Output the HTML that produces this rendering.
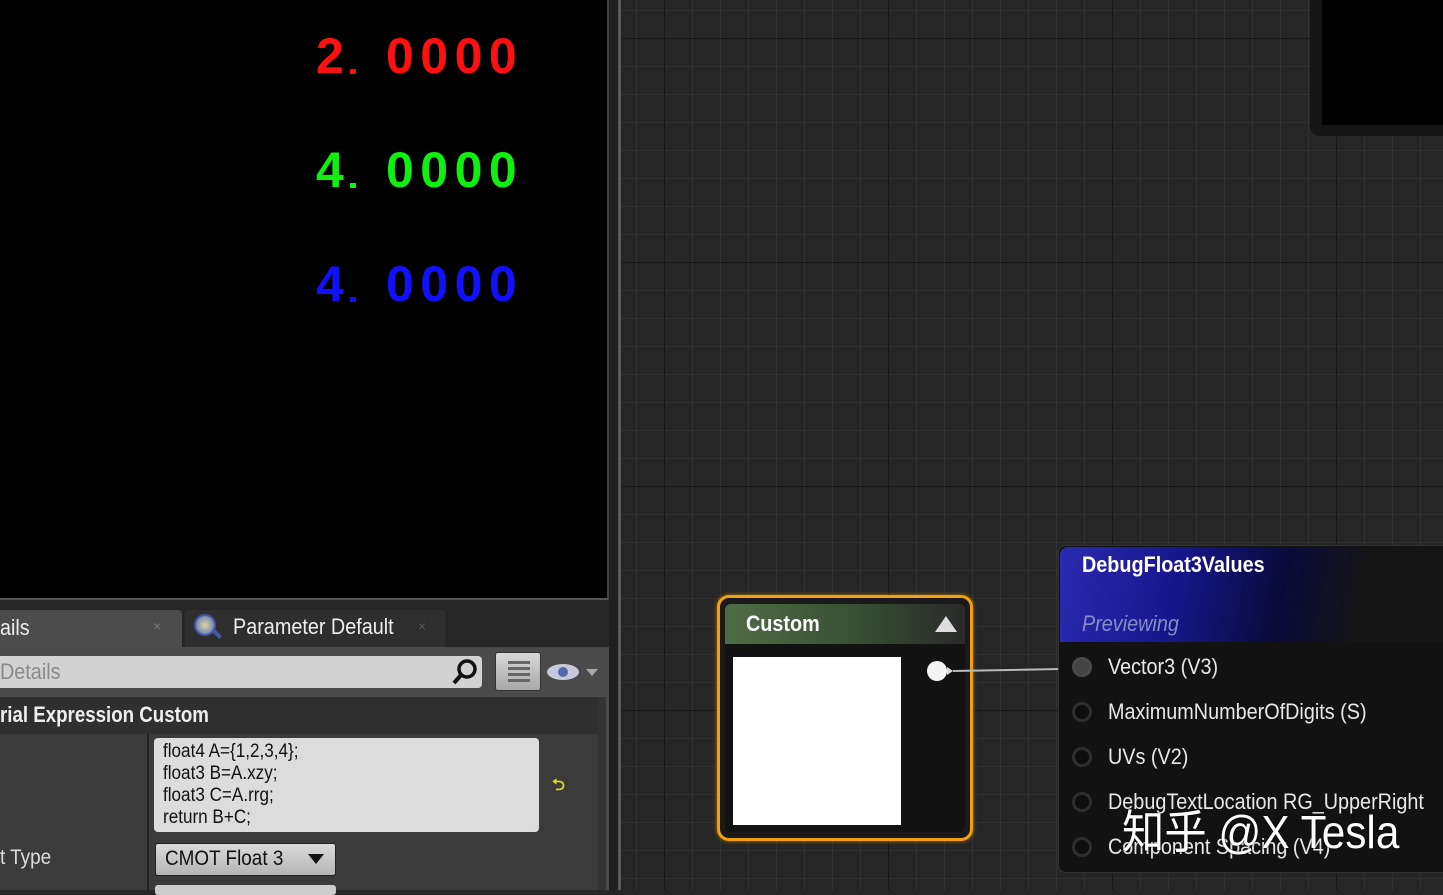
<!DOCTYPE html>
<html><head><meta charset="utf-8"><style>
*{margin:0;padding:0;box-sizing:border-box}
body{width:1443px;height:890px;overflow:hidden;background:#262626;font-family:"Liberation Sans","Noto Sans CJK SC",sans-serif;position:relative}
.abs{position:absolute}
#grid{left:621px;top:0;width:822px;height:890px;
background-color:#262626;
background-image:
linear-gradient(to right,#171717 0 1px,transparent 1px),
linear-gradient(to bottom,#171717 0 1px,transparent 1px),
linear-gradient(to right,#323232 0 1px,transparent 1px),
linear-gradient(to bottom,#323232 0 1px,transparent 1px);
background-size:224px 224px,224px 224px,28px 28px,28px 28px;
background-position:43px 38px,43px 38px,15px 10px,15px 10px}
.num{font-family:"Liberation Sans",sans-serif;font-weight:bold;font-size:50px;line-height:50px;letter-spacing:6.5px;white-space:nowrap}
.dot{font-family:"Liberation Sans",sans-serif;font-weight:bold;font-size:24px}
.pin{width:20px;height:20px;border-radius:50%;border:3px solid #2e2e2e;background:#0e0e0e}
.pl{color:#e8e8e8;font-size:22px;transform:scaleX(0.9);transform-origin:left;white-space:nowrap}
</style></head><body>
<div id="grid" class="abs"></div>
<!-- left viewport -->
<div class="abs" style="left:0;top:0;width:609px;height:600px;background:#000;border-bottom:2px solid #555;border-right:2px solid #444"></div>
<div class="abs" style="left:609px;top:0;width:9px;height:890px;background:#1f1f1f"></div>
<div class="abs" style="left:618px;top:0;width:3px;height:890px;background:#5a5a5a"></div>
<div class="abs num" style="left:316px;top:31px;color:#ff1010">2</div>
<div class="abs" style="left:350px;top:69px;width:6px;height:5px;background:#ff1010"></div>
<div class="abs num" style="left:386px;top:31px;color:#ff1010">0000</div>
<div class="abs num" style="left:316px;top:145px;color:#10f010">4</div>
<div class="abs" style="left:350px;top:183px;width:6px;height:5px;background:#10f010"></div>
<div class="abs num" style="left:386px;top:145px;color:#10f010">0000</div>
<div class="abs num" style="left:316px;top:259px;color:#1010ff">4</div>
<div class="abs" style="left:350px;top:297px;width:6px;height:5px;background:#1010ff"></div>
<div class="abs num" style="left:386px;top:259px;color:#1010ff">0000</div>
<!-- details panel -->
<div class="abs" style="left:0;top:602px;width:609px;height:288px;background:#262626"></div>
<div class="abs" style="left:0;top:610px;width:182px;height:38px;background:#4c4c4c;border-radius:0 4px 0 0"></div>
<div class="abs" style="left:0;top:615px;color:#eee;font-size:22px;transform:scaleX(.9);transform-origin:left">ails</div>
<div class="abs" style="left:153px;top:618px;color:#777;font-size:14px">×</div>
<div class="abs" style="left:185px;top:610px;width:260px;height:37px;background:#2e2e2e;border-radius:4px 4px 0 0"></div>
<div class="abs" style="left:194px;top:614px;width:22px;height:22px;border-radius:50%;background:radial-gradient(#d8d8a0,#5566bb);border:2px solid #4455aa"></div>
<div class="abs" style="left:212px;top:632px;width:10px;height:4px;background:#4455aa;transform:rotate(45deg)"></div>
<div class="abs" style="left:233px;top:614px;color:#eee;font-size:22px;transform:scaleX(.9);transform-origin:left;white-space:nowrap">Parameter Default</div>
<div class="abs" style="left:418px;top:618px;color:#555;font-size:14px">×</div>
<div class="abs" style="left:0;top:647px;width:609px;height:243px;background:#4a4a4a"></div>
<div class="abs" style="left:0;top:656px;width:482px;height:32px;background:#d2d2d2;border-radius:0 4px 4px 0"></div>
<div class="abs" style="left:0;top:659px;color:#8a8a8a;font-size:22px;transform:scaleX(.9);transform-origin:left">Details</div>
<svg class="abs" style="left:450px;top:657px" width="32" height="30"><circle cx="17" cy="12" r="8" fill="none" stroke="#111" stroke-width="3.5"/><line x1="11" y1="18" x2="4" y2="26" stroke="#111" stroke-width="4"/></svg>
<div class="abs" style="left:495px;top:652px;width:46px;height:39px;background:linear-gradient(#d8d8d8,#a8a8a8);border:1px solid #333;border-radius:3px"></div>
<svg class="abs" style="left:506px;top:659px" width="26" height="26"><g fill="#666"><rect x="2" y="2" width="22" height="3"/><rect x="2" y="8" width="22" height="3"/><rect x="2" y="14" width="22" height="3"/><rect x="2" y="20" width="22" height="3"/></g></svg>
<svg class="abs" style="left:546px;top:660px" width="56" height="24"><ellipse cx="17" cy="12" rx="16" ry="8" fill="#c8c8dc"/><circle cx="17" cy="12" r="5" fill="#5566aa"/><path d="M40 9 L52 9 L46 16Z" fill="#aaa"/></svg>
<div class="abs" style="left:0;top:697px;width:606px;height:37px;background:#2f2f2f"></div>
<div class="abs" style="left:0;top:702px;color:#eee;font-size:22px;font-weight:bold;transform:scaleX(.85);transform-origin:left;white-space:nowrap">rial Expression Custom</div>
<div class="abs" style="left:0;top:734px;width:598px;height:156px;background:#3b3b3b"></div>
<div class="abs" style="left:598px;top:697px;width:8px;height:193px;background:#333"></div>
<div class="abs" style="left:147px;top:734px;width:2px;height:156px;background:#222"></div>
<div class="abs" style="left:154px;top:738px;width:385px;height:94px;background:#dcdcdc;border-radius:4px"></div>
<div class="abs" style="left:163px;top:741px;color:#111;font-size:19px;line-height:22px;transform:scaleX(.9);transform-origin:left;white-space:nowrap">float4 A={1,2,3,4};<br>float3 B=A.xzy;<br>float3 C=A.rrg;<br>return B+C;</div>
<div class="abs" style="left:552px;top:774px;color:#dddd22;font-size:16px;font-weight:bold">⮌</div>
<div class="abs" style="left:0;top:846px;color:#ddd;font-size:21px;transform:scaleX(.9);transform-origin:left">t Type</div>
<div class="abs" style="left:155px;top:843px;width:181px;height:33px;background:linear-gradient(#dadada,#b5b5b5);border:1px solid #222;border-radius:3px"></div>
<div class="abs" style="left:165px;top:847px;color:#111;font-size:21px;transform:scaleX(.9);transform-origin:left;white-space:nowrap">CMOT Float 3</div>
<svg class="abs" style="left:307px;top:853px" width="18" height="12"><path d="M1 1H17L9 11Z" fill="#111"/></svg>
<div class="abs" style="left:155px;top:885px;width:181px;height:10px;background:#ccc;border-radius:3px"></div>
<!-- top right box -->
<div class="abs" style="left:1310px;top:-10px;width:140px;height:146px;background:#151515;border-radius:10px"></div>
<div class="abs" style="left:1322px;top:0;width:121px;height:125px;background:#000"></div>
<!-- Custom node -->
<div class="abs" style="left:717px;top:595px;width:256px;height:246px;border:3px solid #f0a010;border-radius:12px;background:#1a1a1a;box-shadow:0 0 4px #b07000"></div>
<div class="abs" style="left:725px;top:604px;width:240px;height:40px;background:linear-gradient(to right,#4f6d45,#3a5236 50%,#2a2a2a);border-radius:6px 6px 0 0"></div>
<div class="abs" style="left:746px;top:611px;color:#fff;font-size:22px;font-weight:bold;transform:scaleX(.9);transform-origin:left">Custom</div>
<svg class="abs" style="left:934px;top:615px" width="24" height="18"><path d="M1 17H23L12 1Z" fill="#ddd"/></svg>
<div class="abs" style="left:725px;top:644px;width:240px;height:188px;background:#121212;border-radius:0 0 6px 6px"></div>
<div class="abs" style="left:733px;top:657px;width:168px;height:168px;background:#fff"></div>
<div class="abs" style="left:927px;top:661px;width:20px;height:20px;border-radius:50%;background:#f4f4f4"></div>
<div class="abs" style="left:947px;top:667px;width:0;height:0;border-left:6px solid #ddd;border-top:4px solid transparent;border-bottom:4px solid transparent"></div>
<div class="abs" style="left:953px;top:669px;width:108px;height:2px;background:#bbb;transform:rotate(-1deg)"></div>
<!-- Debug node -->
<div class="abs" style="left:1058px;top:545px;width:400px;height:328px;background:#121212;border-radius:8px;border:1px solid #333"></div>
<div class="abs" style="left:1060px;top:547px;width:400px;height:95px;background:linear-gradient(100deg,#2a2ab0 0%,#16168a 30%,#0a0a3a 55%,#151515 75%);border-radius:8px 0 0 0"></div>
<div class="abs" style="left:1082px;top:552px;color:#fff;font-size:22px;font-weight:bold;transform:scaleX(.9);transform-origin:left">DebugFloat3Values</div>
<div class="abs" style="left:1082px;top:611px;color:#8a8ac8;font-size:22px;font-style:italic;transform:scaleX(.9);transform-origin:left">Previewing</div>
<div class="abs pin" style="left:1072px;top:657px;background:#444;border-color:#4a4a4a"></div>
<div class="abs pl" style="left:1108px;top:654px">Vector3 (V3)</div>
<div class="abs pin" style="left:1072px;top:702px"></div>
<div class="abs pl" style="left:1108px;top:699px">MaximumNumberOfDigits (S)</div>
<div class="abs pin" style="left:1072px;top:747px"></div>
<div class="abs pl" style="left:1108px;top:744px">UVs (V2)</div>
<div class="abs pin" style="left:1072px;top:792px"></div>
<div class="abs pl" style="left:1108px;top:789px">DebugTextLocation RG_UpperRight</div>
<div class="abs pin" style="left:1072px;top:837px"></div>
<div class="abs pl" style="left:1108px;top:834px">Component Spacing (V4)</div>
<div class="abs" style="left:1122px;top:796px;color:#fff;font-size:46px;white-space:nowrap;transform:scaleX(.92);transform-origin:left;text-shadow:0 0 2px #000">知乎 @X Tesla</div>
</body></html>
